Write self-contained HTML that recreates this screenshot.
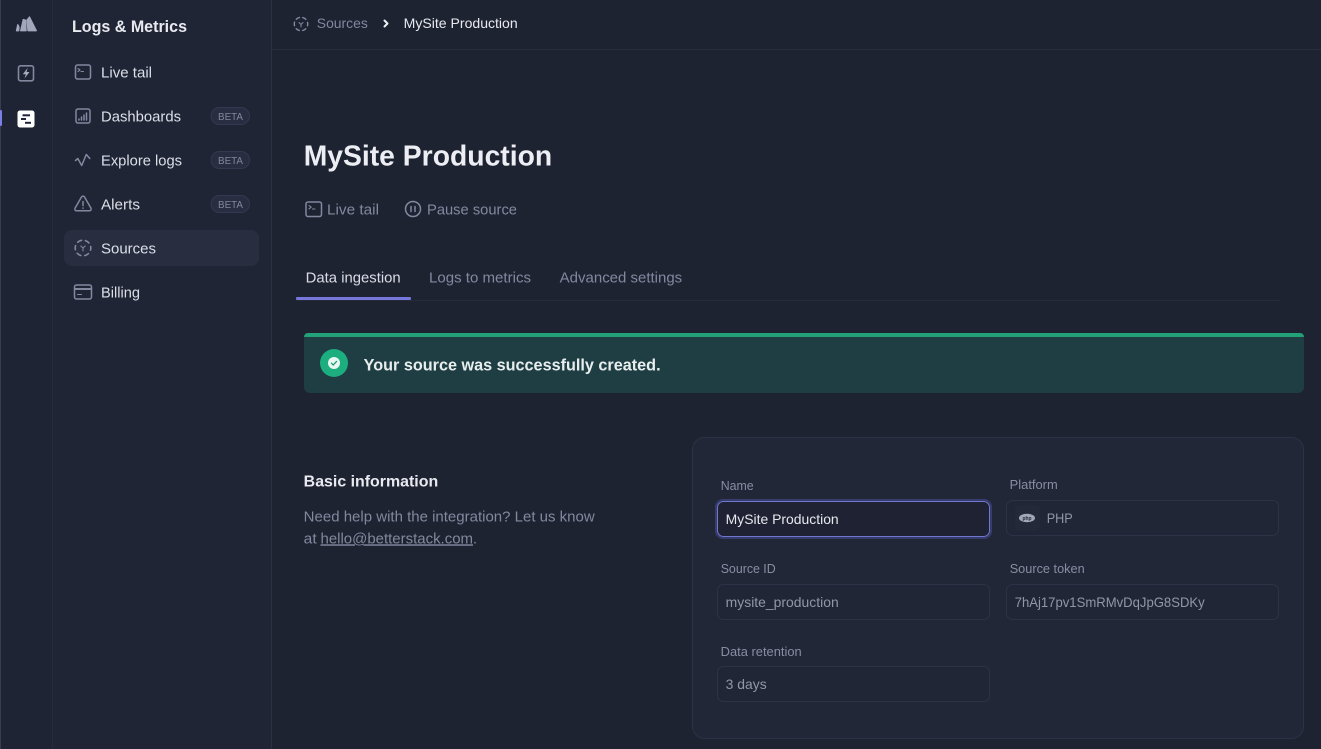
<!DOCTYPE html>
<html lang="en">
<head>
<meta charset="utf-8">
<title>MySite Production</title>
<style>
html,body{margin:0;padding:0;width:1321px;height:749px;overflow:hidden;background:#1e2332}
svg{display:block}
text{font-family:"Liberation Sans",sans-serif;font-size:14.4px;fill:#e0e2ea}
.nav{fill:#dcdfe8;font-size:14.400px}
.b{font-weight:700}
.mut{fill:#83889e}
.lab{fill:#888da2;font-size:12.800px}
.val{fill:#9296a8;font-size:13.800px}
.beta{fill:#82879c;font-size:10px}
.badge{fill:#282d41;stroke:#33394e;stroke-width:1}
.ic{fill:none;stroke:#83889f;stroke-width:1.5;stroke-linecap:round;stroke-linejoin:round}
.inp{fill:#212637;stroke:#2d3246;stroke-width:1}
</style>
</head>
<body>
<svg width="1321" height="749" viewBox="0 0 1321 749" xmlns="http://www.w3.org/2000/svg">
<rect width="1321" height="749" fill="#1e2332"/>
<!-- rail -->
<rect x="0" y="0" width="52" height="749" fill="#1f2434"/>
<rect x="0" y="0" width="1" height="749" fill="#383d54"/>
<rect x="52" y="0" width="1" height="749" fill="#262b3d"/>
<!-- sidebar -->
<rect x="53" y="0" width="218" height="749" fill="#202536"/>
<rect x="271" y="0" width="1" height="749" fill="#2a2f42"/>
<!-- rail icons -->
<g fill="#a3a7bb" stroke="#a3a7bb" stroke-width="1.300" stroke-linejoin="round">
<polygon points="16.500,30.700 17.800,24.700 19,27 18.700,30.700"/>
<polygon points="20.700,30.700 23.300,19.500 25.600,20.200 26.100,30.700"/>
<polygon points="28,30.700 27,20 29.500,17 36.300,30.700"/>
</g>
<rect x="18.500" y="65.800" width="15" height="15" rx="2" fill="none" stroke="#83889f" stroke-width="1.600"/>
<path d="M27.800 67.800L22.800 74.200h3L24.500 78.500l5-6.500h-3z" fill="#a8acbf"/>
<rect x="0" y="110" width="2" height="16" rx="1" fill="#7b7fe8"/>
<rect x="17.500" y="110.500" width="17" height="17" rx="2.500" fill="#fff"/>
<g fill="#20253a"><rect x="22.500" y="114.300" width="7.500" height="2"/><rect x="21" y="118" width="5" height="2"/><rect x="25" y="121.800" width="6" height="2"/></g>
<!-- sidebar text -->
<text x="72" y="32" class="b" style="font-size:16.200px;fill:#e8eaf0" textLength="115" lengthAdjust="spacingAndGlyphs">Logs &amp; Metrics</text>
<rect x="64" y="230" width="195" height="36" rx="8" fill="#282d40"/>
<text x="101" y="77.300" class="nav" textLength="51" lengthAdjust="spacingAndGlyphs">Live tail</text>
<text x="101" y="121.300" class="nav" textLength="80" lengthAdjust="spacingAndGlyphs">Dashboards</text>
<text x="101" y="165.300" class="nav" textLength="81" lengthAdjust="spacingAndGlyphs">Explore logs</text>
<text x="101" y="209.300" class="nav" textLength="39" lengthAdjust="spacingAndGlyphs">Alerts</text>
<text x="101" y="253.300" class="nav" textLength="55" lengthAdjust="spacingAndGlyphs">Sources</text>
<text x="101" y="297.300" class="nav" textLength="39" lengthAdjust="spacingAndGlyphs">Billing</text>
<!-- badges -->
<rect x="211" y="107.500" width="38.500" height="17" rx="8.500" class="badge"/>
<rect x="211" y="151.500" width="38.500" height="17" rx="8.500" class="badge"/>
<rect x="211" y="195.500" width="38.500" height="17" rx="8.500" class="badge"/>
<text x="218" y="120" class="beta" textLength="25" lengthAdjust="spacingAndGlyphs">BETA</text>
<text x="218" y="164" class="beta" textLength="25" lengthAdjust="spacingAndGlyphs">BETA</text>
<text x="218" y="208" class="beta" textLength="25" lengthAdjust="spacingAndGlyphs">BETA</text>
<!-- sidebar icons -->
<rect x="75.500" y="65" width="15" height="14" rx="2" class="ic"/>
<path d="M78 68.500l2 1.500-2 1.500M81 71.500h2.500" class="ic" style="stroke-width:1.100"/>
<rect x="76" y="109" width="14" height="14" rx="2" class="ic"/>
<path d="M79 120v-1M81.500 120v-3M84 120v-5M86.500 120v-7" class="ic"/>
<path d="M75.500 160.500L77.800 158.500 81.700 165.500 86.300 154.500 89.800 158.500" class="ic"/>
<path d="M81.500 197a1.700 1.700 0 0 1 3 0l6.500 11.300a1.700 1.700 0 0 1-1.500 2.500H76.500a1.700 1.700 0 0 1-1.500-2.500z" class="ic"/>
<path d="M83 201.500v4M83 208v.2" class="ic"/>
<g class="ic" style="stroke-width:1.600">
<circle cx="83" cy="248" r="7.800" stroke-dasharray="4.200 4" stroke-dashoffset="2"/>
<path d="M80.800 246l2.200 2 2.200-2M83 248v3" style="stroke-width:1.100"/>
</g>
<rect x="74.500" y="285" width="17" height="14" rx="2" class="ic"/>
<path d="M75 289h16" class="ic" style="stroke-width:2"/>
<path d="M77.500 294.500h4" class="ic" style="stroke-width:1.100"/>
<!-- top bar -->
<rect x="272" y="49" width="1049" height="1" fill="#282d40"/>
<g class="ic" style="stroke-width:1.400">
<circle cx="301" cy="24" r="6.700" stroke-dasharray="3.600 3.400" stroke-dashoffset="1.800"/>
<path d="M299 22.500l2 2 2-2M301 24.500v2.500" style="stroke-width:1"/>
</g>
<text x="316.800" y="28.200" class="mut" style="font-size:13.800px" textLength="51" lengthAdjust="spacingAndGlyphs">Sources</text>
<path d="M384.500 20.500l3 3-3 3" fill="none" stroke="#eef0f5" stroke-width="2" stroke-linecap="round" stroke-linejoin="round"/>
<text x="403.700" y="28.200" style="font-size:13.800px;fill:#e8eaf0" textLength="114" lengthAdjust="spacingAndGlyphs">MySite Production</text>
<!-- title -->
<text x="303.700" y="165.300" class="b" style="font-size:28.500px;fill:#eceef3" textLength="248.500" lengthAdjust="spacingAndGlyphs">MySite Production</text>
<!-- actions -->
<rect x="306" y="202" width="15.500" height="14.500" rx="2" class="ic"/>
<path d="M309 205.500l2.200 1.700-2.200 1.700M312.500 209h2.500" class="ic" style="stroke-width:1.100"/>
<text x="327" y="214.300" class="mut" textLength="52" lengthAdjust="spacingAndGlyphs">Live tail</text>
<circle cx="413" cy="209" r="7.500" class="ic"/>
<path d="M411 206.500v5M415 206.500v5" class="ic"/>
<text x="427" y="214.300" class="mut" textLength="90" lengthAdjust="spacingAndGlyphs">Pause source</text>
<!-- tabs -->
<rect x="296" y="300" width="984" height="1" fill="#252a3c"/>
<text x="305.700" y="282.300" style="fill:#dadce5" textLength="95" lengthAdjust="spacingAndGlyphs">Data ingestion</text>
<text x="429" y="282.300" class="mut" textLength="102" lengthAdjust="spacingAndGlyphs">Logs to metrics</text>
<text x="559.700" y="282.300" class="mut" textLength="122.500" lengthAdjust="spacingAndGlyphs">Advanced settings</text>
<rect x="296" y="297" width="115" height="3" rx="1" fill="#7577da"/>
<!-- banner -->
<rect x="304" y="333" width="1000" height="60" rx="6" fill="#1f3e44"/>
<path d="M304 337a4 4 0 0 1 4-4h992a4 4 0 0 1 4 4z" fill="#23a27a"/>
<circle cx="334" cy="363" r="14" fill="#1cae7e"/>
<circle cx="334" cy="363" r="6" fill="#e9f7f2"/>
<path d="M331.500 363.200l1.800 1.800 3.200-3.600" fill="none" stroke="#1a9c72" stroke-width="1.300" stroke-linecap="round" stroke-linejoin="round"/>
<text x="363.600" y="370.500" class="b" style="font-size:16.300px;fill:#e8eeee" textLength="297" lengthAdjust="spacingAndGlyphs">Your source was successfully created.</text>
<!-- basic info -->
<text x="303.700" y="486.500" class="b" style="font-size:15.800px;fill:#e8eaf0" textLength="134.500" lengthAdjust="spacingAndGlyphs">Basic information</text>
<text x="303.700" y="521.300" class="mut" textLength="291" lengthAdjust="spacingAndGlyphs">Need help with the integration? Let us know</text>
<text x="303.700" y="543.300" class="mut" textLength="13" lengthAdjust="spacingAndGlyphs">at</text>
<text x="320.500" y="543.300" class="mut" text-decoration="underline" textLength="152.500" lengthAdjust="spacingAndGlyphs">hello@betterstack.com</text>
<text x="473" y="543.300" class="mut">.</text>
<!-- card -->
<rect x="692.500" y="437.500" width="611" height="301" rx="12" fill="#222738" stroke="#2c3145"/>
<text x="720.700" y="490" class="lab" textLength="33" lengthAdjust="spacingAndGlyphs">Name</text>
<text x="1009.700" y="489" class="lab" textLength="48" lengthAdjust="spacingAndGlyphs">Platform</text>
<text x="720.700" y="573" class="lab" textLength="55" lengthAdjust="spacingAndGlyphs">Source ID</text>
<text x="1009.700" y="573" class="lab" textLength="75" lengthAdjust="spacingAndGlyphs">Source token</text>
<text x="720.700" y="656" class="lab" textLength="81" lengthAdjust="spacingAndGlyphs">Data retention</text>
<!-- name input -->
<rect x="716" y="500" width="275" height="38" rx="7" fill="none" stroke="#363d6c" stroke-width="2"/>
<rect x="717.500" y="501.500" width="272" height="35" rx="6" fill="#1e2232" stroke="#7176cf" stroke-width="1"/>
<text x="725.700" y="524" style="font-size:13.800px;fill:#e6e8ee" textLength="113" lengthAdjust="spacingAndGlyphs">MySite Production</text>
<!-- platform -->
<rect x="1006.500" y="500.500" width="272" height="35" rx="6" class="inp"/>
<rect x="1015" y="505.500" width="25" height="25" rx="4" fill="#242939"/>
<ellipse cx="1027" cy="518" rx="8" ry="4.200" fill="#a3a6b5"/>
<text x="1022.500" y="520" style="font-size:5.500px;fill:#262b3d;font-weight:700" textLength="9" lengthAdjust="spacingAndGlyphs">php</text>
<text x="1046.700" y="523" class="val" textLength="26" lengthAdjust="spacingAndGlyphs">PHP</text>
<!-- source id -->
<rect x="717.500" y="584.500" width="272" height="35" rx="6" class="inp"/>
<text x="725.700" y="607" class="val" textLength="113" lengthAdjust="spacingAndGlyphs">mysite_production</text>
<!-- token -->
<rect x="1006.500" y="584.500" width="272" height="35" rx="6" class="inp"/>
<text x="1014.700" y="607" class="val" textLength="190" lengthAdjust="spacingAndGlyphs">7hAj17pv1SmRMvDqJpG8SDKy</text>
<!-- retention -->
<rect x="717.500" y="666.500" width="272" height="35" rx="6" class="inp"/>
<text x="725.700" y="689" class="val" textLength="41" lengthAdjust="spacingAndGlyphs">3 days</text>
</svg>
</body>
</html>
